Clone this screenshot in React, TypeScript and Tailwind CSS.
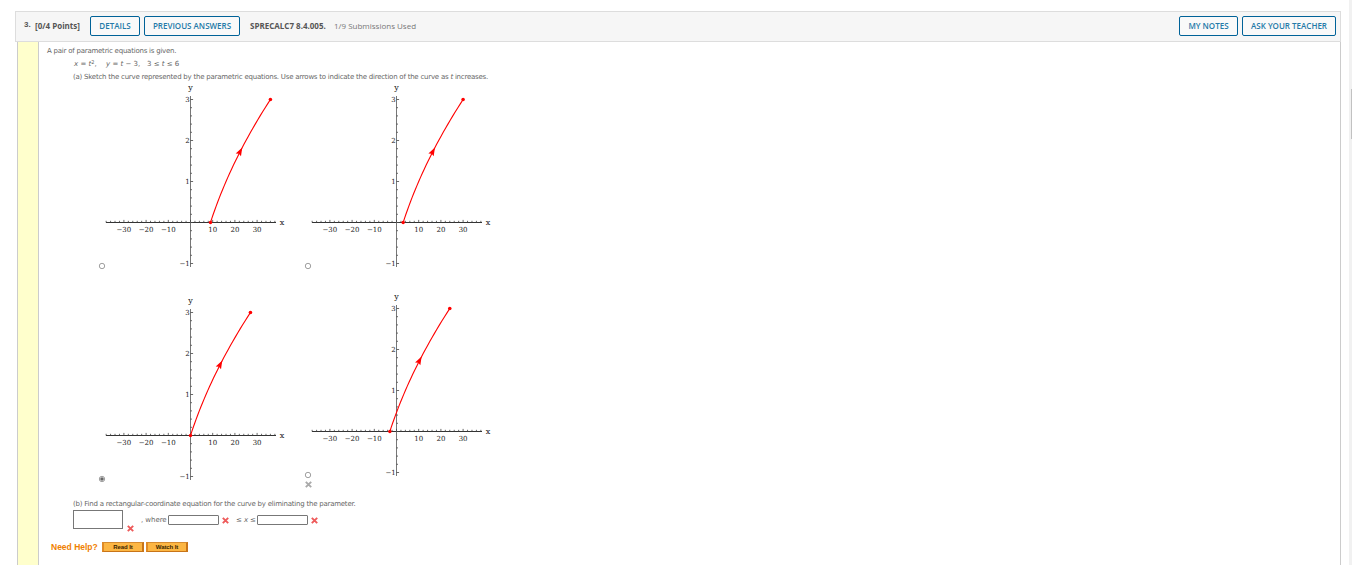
import type { ReactNode } from 'react';

const X_UNIT = 2.22;
const Y_UNIT = 41;
const ORIGIN = { x: 85.5, y: 138.5 };

const px = (x: number) => ORIGIN.x + x * X_UNIT;
const py = (y: number) => ORIGIN.y - y * Y_UNIT;

const range = (from: number, to: number) => Array.from({ length: to - from + 1 }, (_, i) => from + i);

function curvePath(shift: number) {
  return range(0, 30)
    .map((i) => {
      const y = i / 10;
      return `${i === 0 ? 'M' : 'L'}${px((y + 3) ** 2 + shift).toFixed(2)} ${py(y).toFixed(2)}`;
    })
    .join(' ');
}

function Plot({ shift }: { shift: number }) {
  const tip = { x: px(4.82 ** 2 + shift), y: py(1.82) };

  return (
    <svg width="183" height="185" viewBox="0 0 183 185" className="block shrink-0 overflow-visible">
      <g stroke="#333" strokeWidth="1" shapeRendering="crispEdges">
        <line x1="0.6" x2="171" y1={ORIGIN.y} y2={ORIGIN.y} />
        <line x1={ORIGIN.x} x2={ORIGIN.x} y1="12" y2="183" stroke="#777" />
      </g>
      <g stroke="#444" strokeWidth="0.8">
        {range(-19, 19).map((n) => (
          <line key={n} x1={px(n * 2)} x2={px(n * 2)} y1={ORIGIN.y} y2={ORIGIN.y - (n % 5 === 0 ? 2.6 : 1.7)} />
        ))}
        {range(-5, 15).map((n) => (
          <line key={n} y1={py(n / 5)} y2={py(n / 5)} x1={ORIGIN.x} x2={ORIGIN.x + (n % 5 === 0 ? 2.6 : 1.5)} />
        ))}
      </g>
      <g fill="#222" fontSize="7" letterSpacing="0" fontFamily='"DejaVu Serif", serif'>
        {[-30, -20, -10, 10, 20, 30].map((n) => (
          <text key={n} x={px(n)} y="148" textAnchor="middle">
            {n < 0 ? `−${-n}` : n}
          </text>
        ))}
        {[-1, 1, 2, 3].map((n) => (
          <text key={n} x="84.8" y={py(n) + 2.5} textAnchor="end">
            {n < 0 ? `−${-n}` : n}
          </text>
        ))}
        <text x="85.5" y="6" textAnchor="middle" fontSize="8">y</text>
        <text x="177" y="141" textAnchor="middle" fontSize="8">x</text>
      </g>
      <path d={curvePath(shift)} fill="none" stroke="#f00" strokeWidth="1.1" />
      <circle cx={px(9 + shift)} cy={py(0)} r="1.7" fill="#f00" />
      <circle cx={px(36 + shift)} cy={py(3)} r="1.8" fill="#f00" />
      <path
        d="M0 0 L-3 8.4 L0 7 L3 8.4 Z"
        fill="#f00"
        transform={`translate(${tip.x + 0.2} ${tip.y - 0.4}) rotate(28)`}
      />
    </svg>
  );
}

function Radio({ checked }: { checked?: boolean }) {
  return (
    <svg width="6" height="6" viewBox="0 0 6 6" className="block shrink-0 overflow-visible">
      <circle cx="3" cy="3" r="2.7" fill="#fff" stroke="#888" strokeWidth="0.8" />
      {checked && <circle cx="3" cy="3" r="1.8" fill="#666" />}
    </svg>
  );
}

function Cross({ color }: { color: string }) {
  return (
    <svg width="7" height="7" viewBox="0 0 7 7" className="block shrink-0">
      <path d="M0.8 0.8 L6.2 6.2 M6.2 0.8 L0.8 6.2" stroke={color} strokeWidth="1.9" />
    </svg>
  );
}

function Option({ shift, checked }: { shift: number; checked?: boolean }) {
  return (
    <div className="flex w-[206px] items-end">
      <Radio checked={checked} />
      <Plot shift={shift} />
    </div>
  );
}

function HeaderButton({ width, children }: { width: string; children: ReactNode }) {
  return (
    <button
      className={`flex h-5 items-center justify-center rounded-[2px] border border-[#006298] bg-[#f9f9f9] text-[8px] font-semibold whitespace-nowrap text-[#2479a8] ${width}`}
    >
      {children}
    </button>
  );
}

function HelpButton({ children }: { children: ReactNode }) {
  return (
    <button className="flex h-[10px] w-[42px] items-center justify-center border border-x-2 border-t-[#d58b30] border-r-[#c87418] border-b-[#c87418] border-l-[#e08a25] bg-[#fcb643] font-['Liberation_Sans',sans-serif] text-[6px] leading-none font-bold tracking-[-0.1px] text-[#3a2500]">
      {children}
    </button>
  );
}

export default function App() {
  return (
    <div className="flex h-[565px] w-[1352px] justify-between overflow-hidden bg-white">
      <div className="ml-[15px] flex w-[1326px] flex-col pt-[11px]">
        <header className="flex h-[31px] shrink-0 items-center border border-[#ddd] bg-[#f6f6f6] pr-1 pb-px pl-2 font-['Open_Sans',sans-serif] text-[8px] text-[#555]">
          <span className="w-[11px] pb-0.5 font-['Liberation_Sans',sans-serif] font-bold">3.</span>
          <span className="w-[55px] text-[8px] font-bold whitespace-nowrap">[0/4 Points]</span>
          <div className="flex gap-1">
            <HeaderButton width="w-[50px]">DETAILS</HeaderButton>
            <HeaderButton width="w-[96px]">PREVIOUS ANSWERS</HeaderButton>
          </div>
          <span className="ml-[10px] w-[84px] font-bold whitespace-nowrap">SPRECALC7 8.4.005.</span>
          <span className="text-[8px] text-[#777]">1/9 Submissions Used</span>
          <div className="ml-auto flex gap-1">
            <HeaderButton width="w-[59px]">MY NOTES</HeaderButton>
            <HeaderButton width="w-[94px]">ASK YOUR TEACHER</HeaderButton>
          </div>
        </header>

        <main className="ml-0.5 flex flex-1 border-r border-[#ccc]">
          <div className="w-[22px] shrink-0 border-x border-[#ccc] bg-[#ffffcc]" />
          <div className="pt-[3px] pl-2 font-['DejaVu_Sans',sans-serif] text-[7px] leading-[13px] tracking-[-0.23px] whitespace-nowrap text-[#666]">
            <p>A pair of parametric equations is given.</p>
            <div className="pl-[26px]">
              <p className="flex pl-px tracking-normal">
                <span className="w-[32px]">
                  <i>x</i> = <i>t</i>
                  <sup className="text-[5px]">2</sup>,
                </span>
                <span className="w-[41px]">
                  <i>y</i> = <i>t</i> − 3,
                </span>
                <span>
                  3 ≤ <i>t</i> ≤ 6
                </span>
              </p>
              <p>
                (a) Sketch the curve represented by the parametric equations. Use arrows to indicate the direction of the curve as <i>t</i> increases.
              </p>

              <div className="flex pl-[26px]">
                <Option shift={0} />
                <Option shift={-6} />
              </div>
              <div className="mt-[24px] flex pl-[26px]">
                <div className="pt-1">
                  <Option shift={-9} checked />
                </div>
                <div>
                  <Option shift={-12} />
                  <div className="pt-[3px]">
                    <Cross color="#aaa" />
                  </div>
                </div>
              </div>

              <p className="mt-[10px]">
                (b) Find a rectangular-coordinate equation for the curve by eliminating the parameter.
              </p>
              <div className="-mt-px flex h-[22px] items-start">
                <div className="h-[19px] w-[50px] border border-[#777] bg-white" />
                <div className="ml-1 pt-[15px]">
                  <Cross color="#ee5a5a" />
                </div>
                <span className="ml-[7px] w-[27px] pt-1 tracking-[-0.05px]">, where</span>
                <div className="mt-[5px] h-[10px] w-[51px] rounded-[1px] border border-[#777]" />
                <div className="ml-[3px] pt-[7px]">
                  <Cross color="#ee5a5a" />
                </div>
                <span className="ml-[7px] w-[21px] pt-1 tracking-[-0.1px]">
                  ≤ <i>x</i> ≤
                </span>
                <div className="mt-[5px] h-[10px] w-[51px] rounded-[1px] border border-[#777]" />
                <div className="ml-[3px] pt-[7px]">
                  <Cross color="#ee5a5a" />
                </div>
              </div>
            </div>

            <div className="mt-[10px] flex items-center gap-1 pl-1">
              <span className="w-[47px] font-['Liberation_Sans',sans-serif] text-[8.5px] leading-[10px] font-bold tracking-normal text-[#f08000]">
                Need Help?
              </span>
              <div className="flex gap-0.5">
                <HelpButton>Read It</HelpButton>
                <HelpButton>Watch It</HelpButton>
              </div>
            </div>
          </div>
        </main>
      </div>

      <div className="w-[3px] bg-[#f1f1f1] pt-[89px]">
        <div className="ml-auto h-[50px] w-px bg-[#c1c1c1]" />
      </div>
    </div>
  );
}
